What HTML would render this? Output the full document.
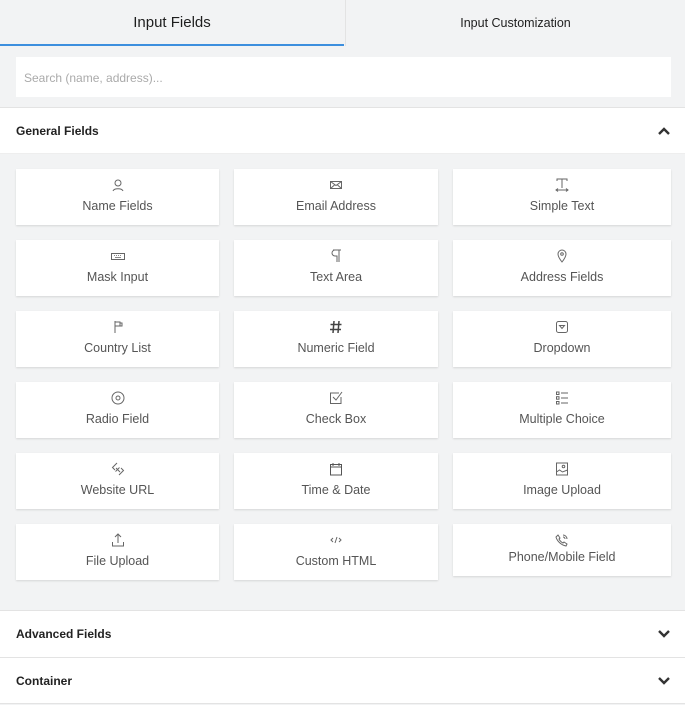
<!DOCTYPE html>
<html><head><style>
*{box-sizing:border-box;margin:0;padding:0}
body{width:685px;height:705px;background:#f2f3f4;font-family:"Liberation Sans",sans-serif;position:relative;overflow:hidden;color:#555}
.tab{position:absolute;top:0;height:46px;display:flex;align-items:center;justify-content:center;color:#1e1e1e}
.s{position:absolute;left:16px;top:57px;width:655px;height:40px;background:#fff;font-size:12px;color:#aaa;padding:14px 8px}
.sec{position:absolute;left:0;width:685px;background:#fff;border-top:1px solid #e3e3e3;font-size:12px;font-weight:bold;color:#222;padding-left:16px;display:flex;align-items:center}
.chev{position:absolute;right:15px;top:50%;margin-top:-5px}
.c{position:absolute;background:#fff;box-shadow:0 1px 2px rgba(0,0,0,.12);text-align:center;font-size:12.5px;color:#555}
.c svg{position:absolute;left:50%;margin-left:-7px;top:9px}
.c span{position:absolute;left:0;right:0;top:30px}
</style></head><body>
<div class="tab" style="left:0;width:344px;font-size:15px;border-bottom:2px solid #3d8fde">Input Fields</div>
<div class="tab" style="left:345px;width:340px;font-size:12.5px;border-left:1px solid #e3e3e3">Input Customization</div>
<div class="s">Search (name, address)...</div>
<div class="sec" style="top:107px;height:47px;border-bottom:1px solid #eee">General Fields
<svg class="chev" width="12" height="10" viewBox="0 0 12 10"><path d="M1 8L6 3L11 8" stroke="#333" stroke-width="2.4" fill="none"/></svg></div>

<div class="c" style="left:16px;top:169px;width:203px;height:56px"><svg width="14" height="14" viewBox="0 0 14 14" fill="none" stroke="#666"><circle cx="7" cy="5" r="3"/><path d="M2 13c1-3 9-3 10 0"/></svg><span>Name Fields</span></div>
<div class="c" style="left:234px;top:169px;width:204px;height:56px"><svg width="14" height="14" viewBox="0 0 14 14" fill="none" stroke="#666"><rect x="1.5" y="3.5" width="11" height="7"/><path d="M1.5 3.5l5.5 4 5.5-4M1.5 10.5l4-3.5M12.5 10.5l-4-3.5"/></svg><span>Email Address</span></div>
<div class="c" style="left:453px;top:169px;width:218px;height:56px"><svg width="14" height="14" viewBox="0 0 14 14" fill="none" stroke="#666"><path d="M2 3V1h10v2M7 1v9M1 12h12M3 10.5L1 12l2 1.5M11 10.5l2 1.5-2 1.5"/></svg><span>Simple Text</span></div>

<div class="c" style="left:16px;top:240px;width:203px;height:56px"><svg width="14" height="14" viewBox="0 0 14 14" fill="none" stroke="#666"><rect x="0.5" y="4.5" width="13" height="6"/><path d="M3 6.5h1M5 6.5h1M7 6.5h1M9 6.5h1M4 8.5h6" stroke-width=".8"/></svg><span>Mask Input</span></div>
<div class="c" style="left:234px;top:240px;width:204px;height:56px"><svg width="14" height="14" viewBox="0 0 14 14" fill="none" stroke="#666"><path d="M10 1H6a3 3 0 000 6h2v6M10 1v12M4 1h8"/></svg><span>Text Area</span></div>
<div class="c" style="left:453px;top:240px;width:218px;height:56px"><svg width="14" height="14" viewBox="0 0 14 14" fill="none" stroke="#666"><path d="M7 13C3 8 3 6 3 5a4 4 0 018 0c0 1 0 3-4 8z"/><circle cx="7" cy="5" r="1.3"/></svg><span>Address Fields</span></div>

<div class="c" style="left:16px;top:311px;width:203px;height:56px"><svg width="14" height="14" viewBox="0 0 14 14" fill="none" stroke="#666"><path d="M4 1v12M4 2h5v4H4M9 3h2v3H9" /></svg><span>Country List</span></div>
<div class="c" style="left:234px;top:311px;width:204px;height:56px"><svg width="14" height="14" viewBox="0 0 14 14" fill="none" stroke="#444" stroke-width="1.5"><path d="M5 1L4 13M10 1L9 13M1.5 4.5h11M1 9.5h11"/></svg><span>Numeric Field</span></div>
<div class="c" style="left:453px;top:311px;width:218px;height:56px"><svg width="14" height="14" viewBox="0 0 14 14" fill="none" stroke="#666"><rect x="1.5" y="1.5" width="11" height="11" rx="2"/><path d="M4.5 5.5h5L7 8.5z"/></svg><span>Dropdown</span></div>

<div class="c" style="left:16px;top:382px;width:203px;height:56px"><svg width="14" height="14" viewBox="0 0 14 14" fill="none" stroke="#666"><circle cx="7" cy="7" r="6"/><circle cx="7" cy="7" r="2"/></svg><span>Radio Field</span></div>
<div class="c" style="left:234px;top:382px;width:204px;height:56px"><svg width="14" height="14" viewBox="0 0 14 14" fill="none" stroke="#666"><path d="M10 2H1.5v10.5H12V6M4 6l3 3 6-8"/></svg><span>Check Box</span></div>
<div class="c" style="left:453px;top:382px;width:218px;height:56px"><svg width="14" height="14" viewBox="0 0 14 14" fill="none" stroke="#666"><rect x="1.5" y="1" width="2.5" height="2.5"/><rect x="1.5" y="5.7" width="2.5" height="2.5"/><rect x="1.5" y="10.5" width="2.5" height="2.5"/><path d="M6 2h7M6 7h7M6 12h7"/></svg><span>Multiple Choice</span></div>

<div class="c" style="left:16px;top:453px;width:203px;height:56px"><svg width="14" height="14" viewBox="0 0 14 14" fill="none" stroke="#666"><path d="M6 1L1.5 5.5 4 8M8 13l4.5-4.5L10 6M5 6l4 4M4.5 9.5l4-4"/></svg><span>Website URL</span></div>
<div class="c" style="left:234px;top:453px;width:204px;height:56px"><svg width="14" height="14" viewBox="0 0 14 14" fill="none" stroke="#555"><rect x="1.5" y="2.5" width="11" height="10.5"/><path d="M1.5 5h11M4 1v3M10 1v3"/></svg><span>Time &amp; Date</span></div>
<div class="c" style="left:453px;top:453px;width:218px;height:56px"><svg width="14" height="14" viewBox="0 0 14 14" fill="none" stroke="#666"><rect x="1.5" y="1" width="11" height="12"/><circle cx="8.5" cy="4.5" r="1.3"/><path d="M1.5 10l3-2 3 2 5-2"/></svg><span>Image Upload</span></div>

<div class="c" style="left:16px;top:524px;width:203px;height:56px"><svg width="14" height="14" viewBox="0 0 14 14" fill="none" stroke="#666"><path d="M7 10V1M4 4l3-3 3 3M1.5 9v4h11V9"/></svg><span>File Upload</span></div>
<div class="c" style="left:234px;top:524px;width:204px;height:56px"><svg width="14" height="14" viewBox="0 0 14 14" fill="none" stroke="#666"><path d="M4 5L2 7l2 2M10 5l2 2-2 2M8 4L6 10"/></svg><span>Custom HTML</span></div>
<div class="c" style="left:453px;top:524px;width:218px;height:52px"><svg width="14" height="14" viewBox="0 0 14 14" fill="none" stroke="#666"><path d="M3 2l2 3-1 1c1 2 2 3 4 4l1-1 3 2-1 2C6 12 2 8 1 4z"/><path d="M8 2a4 4 0 014 4M8 4a2 2 0 012 2"/></svg><span style="top:26px">Phone/Mobile Field</span></div>

<div class="sec" style="top:610px;height:47px">Advanced Fields
<svg class="chev" width="12" height="10" viewBox="0 0 12 10"><path d="M1 2L6 7L11 2" stroke="#333" stroke-width="2.4" fill="none"/></svg></div>
<div class="sec" style="top:657px;height:47px;border-bottom:1px solid #e3e3e3">Container
<svg class="chev" width="12" height="10" viewBox="0 0 12 10"><path d="M1 2L6 7L11 2" stroke="#333" stroke-width="2.4" fill="none"/></svg></div>
</body></html>
